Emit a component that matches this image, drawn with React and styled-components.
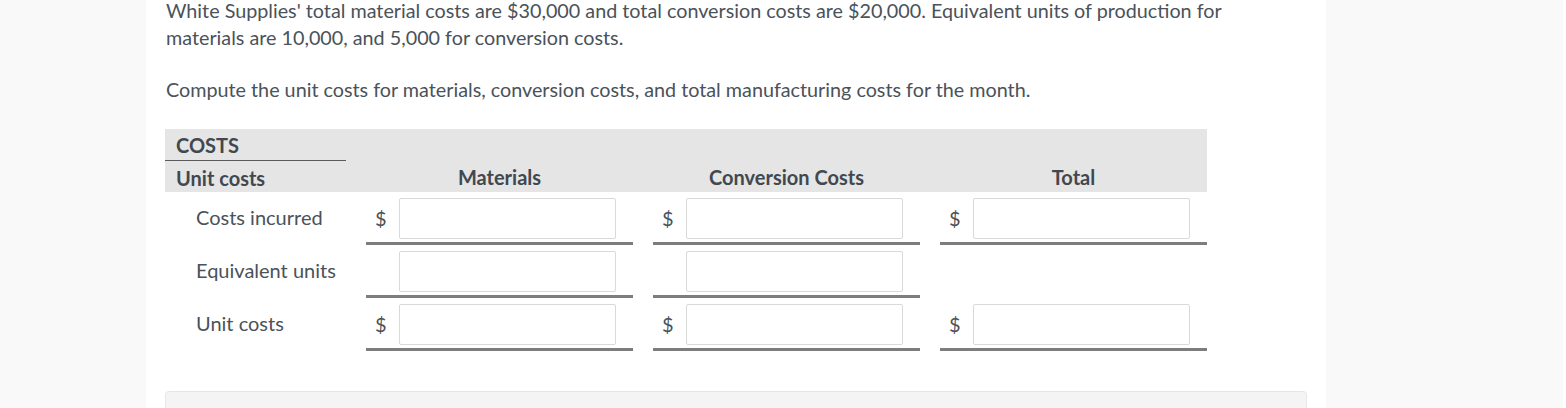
import React from "react";
import styled, { createGlobalStyle } from "styled-components";

const GlobalStyle = createGlobalStyle`
  html, body {
    margin: 0;
    padding: 0;
    background: #ffffff;
    overflow: hidden;
  }
  body {
    font-family: Lato, "Open Sans", sans-serif;
    color: #4a525a;
  }
`;

const Page = styled.div`
  display: flex;
  height: 408px;
  overflow: hidden;
`;

const Side = styled.div`
  background: #f9f9f9;
  width: ${(p) => p.width || "auto"};
  flex: ${(p) => (p.grow ? 1 : "none")};
  margin-right: ${(p) => p.gap || 0};
`;

const Panel = styled.div`
  width: 1180px;
  box-sizing: border-box;
  padding: 0 19px;
  background: #ffffff;
`;

const Paragraph = styled.p`
  font-size: 19.75px;
  line-height: 27px;
  max-width: 1080px;
  margin: ${(p) => (p.first ? "-3px 0 25px 1px" : "0 0 26px 1px")};
`;

const columns = "181px 267px 267px 267px";

const Table = styled.div`
  display: grid;
  grid-template-columns: ${columns};
  column-gap: 20px;
  width: 1042px;
`;

const Header = styled.div`
  grid-column: 1 / -1;
  display: grid;
  grid-template-columns: ${columns};
  column-gap: 20px;
  background: #e5e5e5;
  height: 63px;
  box-sizing: border-box;
  padding-top: 5px;
`;

const HeadLabel = styled.div`
  font-weight: 700;
  font-size: 20px;
  color: #414850;
`;

const HeadTitle = styled.div`
  padding: 0 11px;
  line-height: 22px;
  border-bottom: 1px solid #5a5a5a;
  padding-bottom: 4px;
`;

const HeadSub = styled.div`
  padding: 6px 11px 0;
  line-height: 22px;
`;

const ColHead = styled.div`
  align-self: end;
  text-align: center;
  font-weight: 700;
  font-size: 20px;
  color: #414850;
  line-height: 22px;
  padding-bottom: 4px;
`;

const RowLabel = styled.div`
  font-size: 20px;
  padding: 4px 0 8px 31px;
  display: flex;
  align-items: center;
  height: 53px;
  box-sizing: border-box;
`;

const Cell = styled.div`
  display: flex;
  align-items: center;
  height: 53px;
  box-sizing: border-box;
  padding: 6px 17px 3px 0;
  border-bottom: ${(p) => (p.empty ? "3px solid transparent" : "3px solid #7d7d7d")};
`;

const Dollar = styled.span`
  width: 33px;
  box-sizing: border-box;
  padding-left: 9px;
  margin-top: -2px;
  font-size: 20px;
  color: #4a525a;
`;

const Input = styled.input`
  width: 217px;
  height: 41px;
  box-sizing: border-box;
  border: 1px solid #d9d9d9;
  border-radius: 2px;
  background: #ffffff;
  outline: none;
  font-family: inherit;
  font-size: 16px;
`;

const InfoBox = styled.div`
  margin-top: 40px;
  height: 60px;
  background: #f4f4f4;
  border: 1px solid #e6e6e6;
  border-radius: 4px;
`;

const rows = [
  { label: "Costs incurred", dollar: true, total: true },
  { label: "Equivalent units", dollar: false, total: false },
  { label: "Unit costs", dollar: true, total: true },
];

const App = () => {
  return (
    <>
      <GlobalStyle />
      <Page>
        <Side width="146px" />
        <Panel>
          <Paragraph first>
            White Supplies' total material costs are $30,000 and total conversion costs are $20,000. Equivalent units of
            production for materials are 10,000, and 5,000 for conversion costs.
          </Paragraph>
          <Paragraph>
            Compute the unit costs for materials, conversion costs, and total manufacturing costs for the month.
          </Paragraph>
          <Table>
            <Header>
              <HeadLabel>
                <HeadTitle>COSTS</HeadTitle>
                <HeadSub>Unit costs</HeadSub>
              </HeadLabel>
              <ColHead>Materials</ColHead>
              <ColHead>Conversion Costs</ColHead>
              <ColHead>Total</ColHead>
            </Header>
            {rows.map((r) => (
              <React.Fragment key={r.label}>
                <RowLabel>{r.label}</RowLabel>
                <Cell>
                  <Dollar>{r.dollar ? "$" : ""}</Dollar>
                  <Input type="text" />
                </Cell>
                <Cell>
                  <Dollar>{r.dollar ? "$" : ""}</Dollar>
                  <Input type="text" />
                </Cell>
                {r.total ? (
                  <Cell>
                    <Dollar>$</Dollar>
                    <Input type="text" />
                  </Cell>
                ) : (
                  <Cell empty />
                )}
              </React.Fragment>
            ))}
          </Table>
          <InfoBox />
        </Panel>
        <Side grow gap="3px" />
      </Page>
    </>
  );
};

export default App;
